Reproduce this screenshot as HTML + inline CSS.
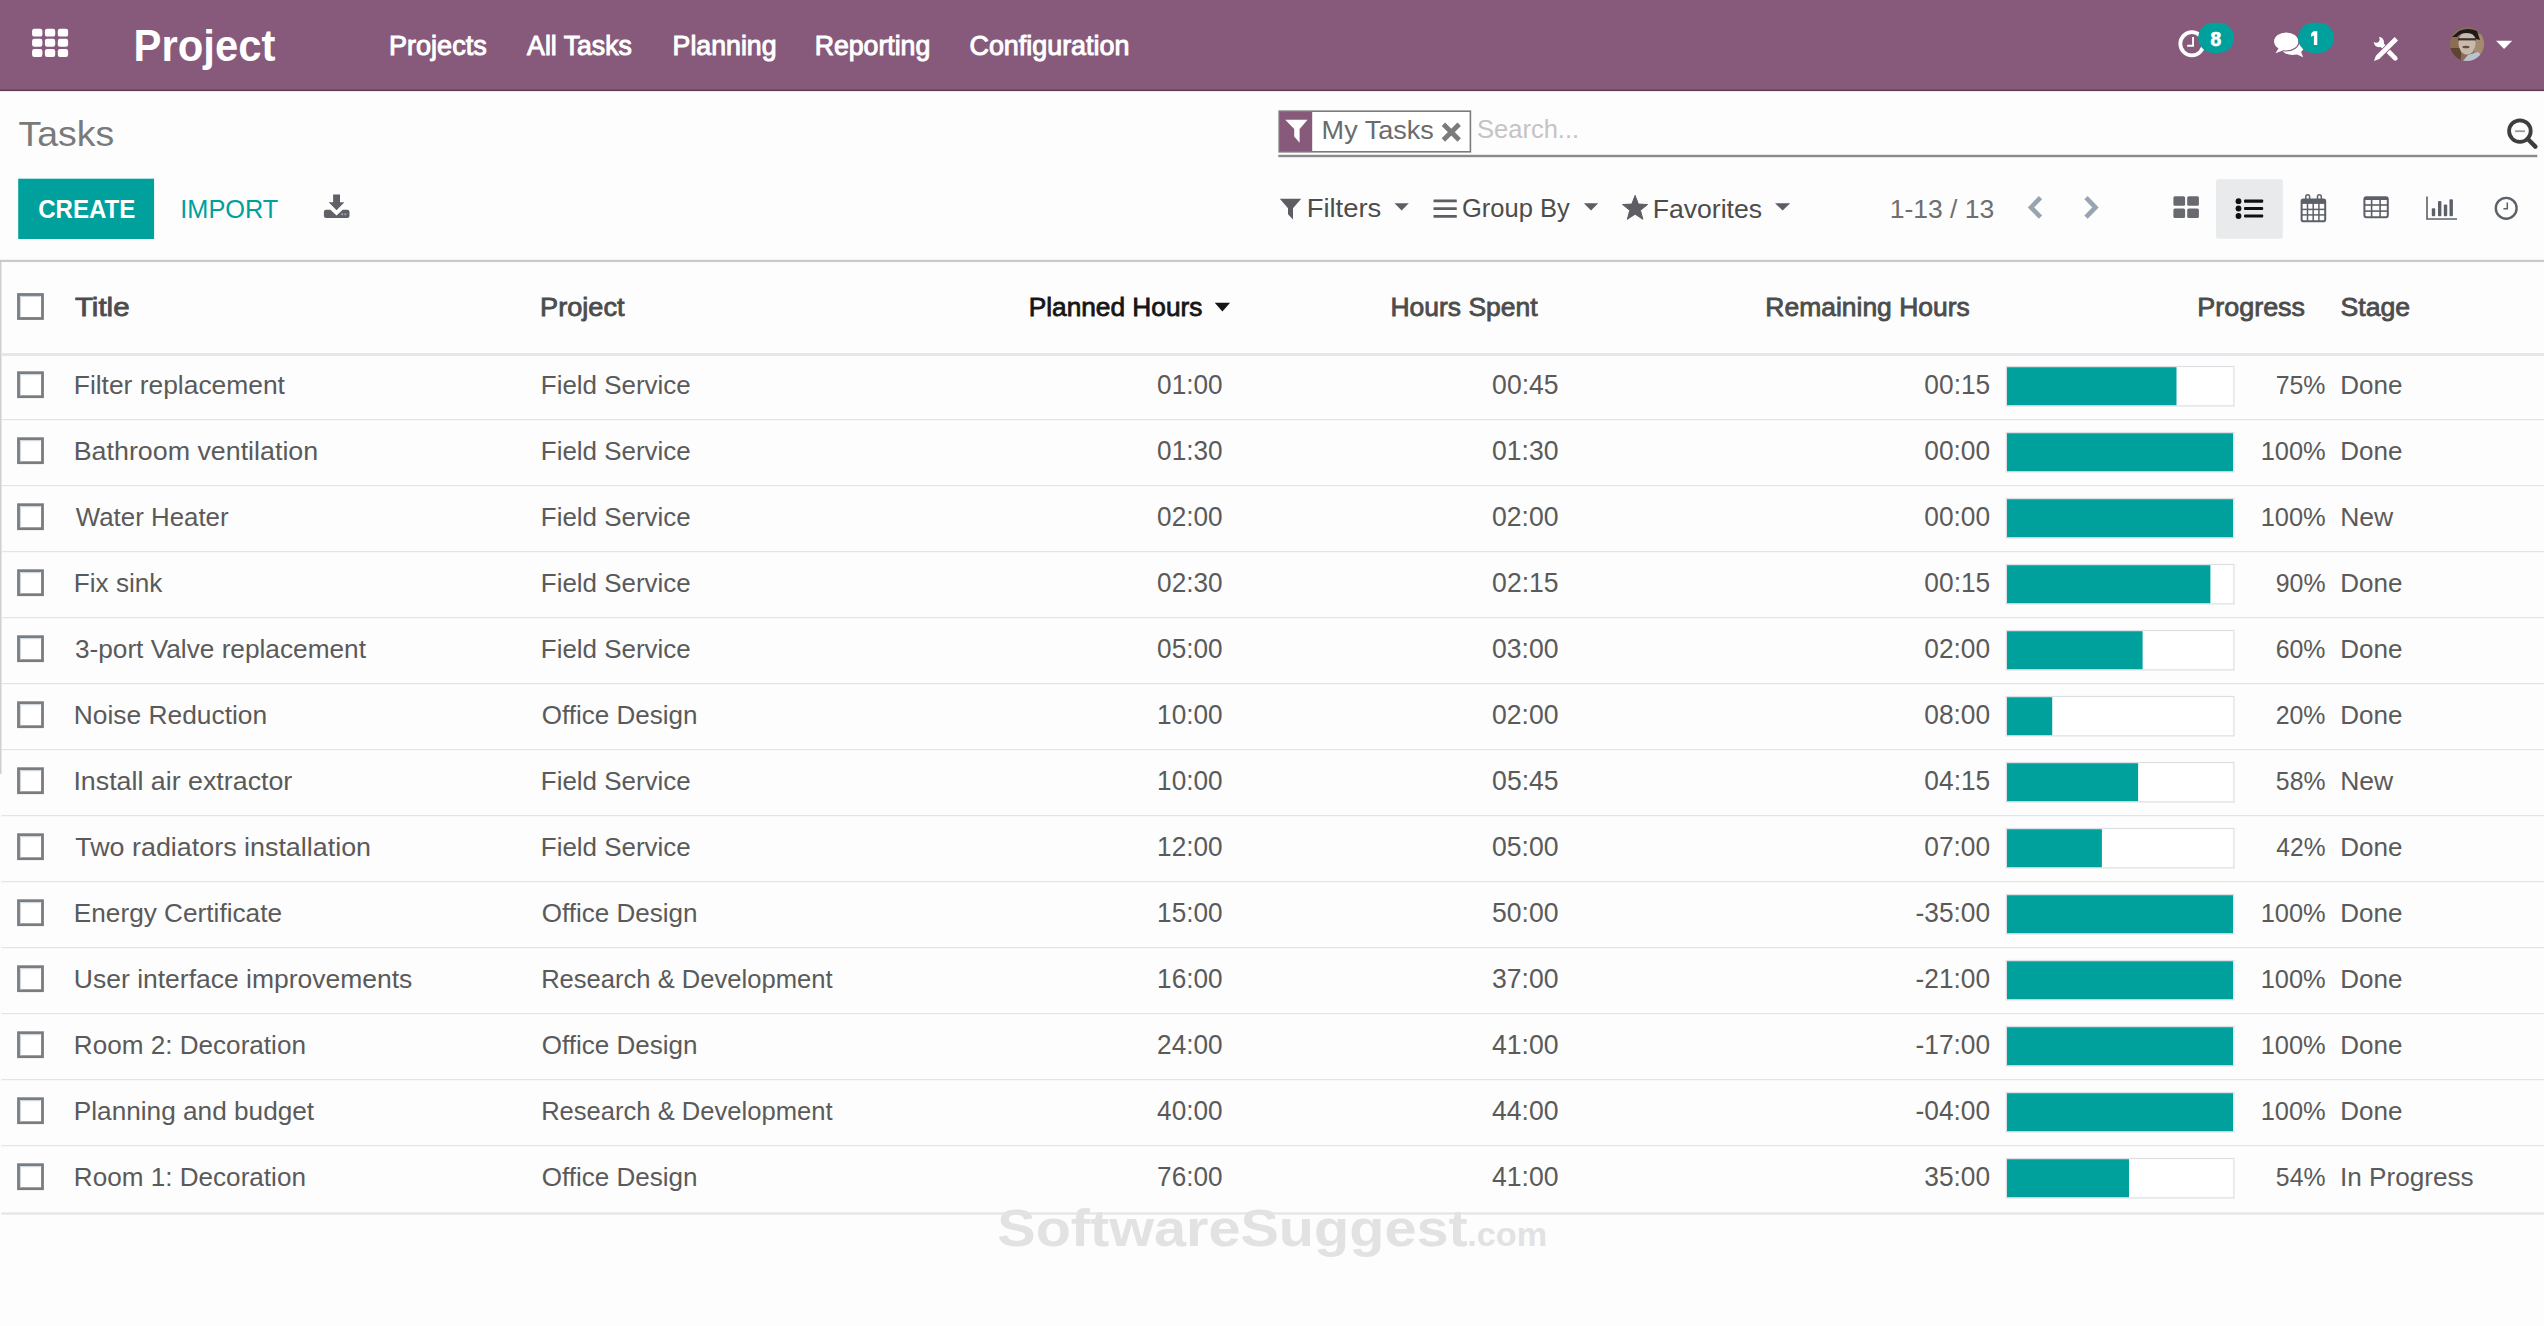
<!DOCTYPE html>
<html><head><meta charset="utf-8"><title>Tasks - Odoo</title>
<style>
html,body{margin:0;padding:0;background:#fdfdfd;overflow:hidden}
svg{display:block}
text{font-family:"Liberation Sans",sans-serif}
</style></head><body>
<svg width="2544" height="1326" viewBox="0 0 2544 1326">
<rect x="0" y="0" width="2544" height="90" fill="#875A7B"/>
<rect x="0" y="89.6" width="2544" height="1.5" fill="#5c3b53"/>
<rect x="32.1" y="28.7" width="10.3" height="7.9" rx="2.2" fill="#fff"/>
<rect x="32.1" y="38.8" width="10.3" height="7.9" rx="2.2" fill="#fff"/>
<rect x="32.1" y="49.0" width="10.3" height="7.9" rx="2.2" fill="#fff"/>
<rect x="44.9" y="28.7" width="10.3" height="7.9" rx="2.2" fill="#fff"/>
<rect x="44.9" y="38.8" width="10.3" height="7.9" rx="2.2" fill="#fff"/>
<rect x="44.9" y="49.0" width="10.3" height="7.9" rx="2.2" fill="#fff"/>
<rect x="57.8" y="28.7" width="10.3" height="7.9" rx="2.2" fill="#fff"/>
<rect x="57.8" y="38.8" width="10.3" height="7.9" rx="2.2" fill="#fff"/>
<rect x="57.8" y="49.0" width="10.3" height="7.9" rx="2.2" fill="#fff"/>
<circle cx="2191.9" cy="43.8" r="11.6" fill="none" stroke="#fff" stroke-width="3.8"/>
<path d="M2193.05 37.1 V45.75 H2187.2" fill="none" stroke="#fff" stroke-width="1.9"/>
<rect x="2198.2" y="22.8" width="35.8" height="30.1" rx="15" fill="#00A09D"/>
<ellipse cx="2292.3" cy="46.2" rx="11.6" ry="8.8" fill="#fff"/>
<path d="M2295.5 53.8 L2303.2 57.2 L2300.5 50.5 Z" fill="#fff"/>
<ellipse cx="2286.2" cy="41.4" rx="12.4" ry="9.3" fill="#fff" stroke="#875A7B" stroke-width="1.8"/>
<ellipse cx="2286.2" cy="41.4" rx="12.1" ry="9.0" fill="#fff"/>
<path d="M2279 47.5 L2275.5 53.3 L2285.5 49.5 Z" fill="#fff"/>
<rect x="2298.1" y="22.8" width="35.9" height="30.1" rx="15" fill="#00A09D"/>
<path d="M2313.9 31.2 H2317.3 V44.9 H2313.9 V35.6 L2311.0 36.7 V33.8 L2313.4 31.2 Z" fill="#fff"/>
<path d="M2379.5 42.5 L2395.3 58.3" stroke="#fff" stroke-width="4.7" stroke-linecap="round"/>
<circle cx="2378.9" cy="42.1" r="5.1" fill="#fff"/>
<circle cx="2376.2" cy="39.3" r="3.4" fill="#875A7B"/>
<path d="M2394.6 37.0 L2398.0 40.4 L2379.3 59.1 L2374.0 61.0 L2375.9 55.7 Z" fill="#fff" stroke="#875A7B" stroke-width="1.6" stroke-linejoin="round"/>
<path d="M2394.6 37.0 L2398.0 40.4 L2379.3 59.1 L2374.0 61.0 L2375.9 55.7 Z" fill="#fff"/>
<defs><radialGradient id="av" cx="50%" cy="45%" r="55%"><stop offset="0" stop-color="#c9a88c"/><stop offset="0.55" stop-color="#9b7a5c"/><stop offset="1" stop-color="#5a4634"/></radialGradient><clipPath id="avc"><circle cx="2467" cy="44" r="17.1"/></clipPath></defs>
<circle cx="2467" cy="44" r="17.1" fill="#8a6d52"/>
<g clip-path="url(#avc)"><rect x="2449" y="48" width="12" height="14" fill="#5e4532"/><rect x="2474" y="34" width="12" height="20" fill="#a38a70"/><ellipse cx="2467" cy="43" rx="8.6" ry="11.5" fill="#c8b9ad"/><path d="M2452 37 L2459 31 Q2468 27 2477 31 L2480 40 L2476 39 Q2474 33 2467 33 Q2460 33 2457 37 Z" fill="#1e1a1c"/><rect x="2458" y="38.2" width="18" height="2.2" fill="#3a2f2b"/><ellipse cx="2466" cy="47" rx="3.6" ry="1.3" fill="#6a4c3c"/><path d="M2462 62 L2468 55 L2478 52 L2484 58 L2480 62 Z" fill="#b9c3d2"/></g>
<path d="M2496 40.8 H2512.2 L2504.1 49.1 Z" fill="#fff"/>
<rect x="1279.2" y="111.2" width="191.2" height="40.6" fill="#fff" stroke="#7b7b7b" stroke-width="1.6"/>
<rect x="1280" y="112" width="32.2" height="39" fill="#875A7B"/>
<path d="M1285.2 119.8 H1307.6 L1299.6 129 V142.8 L1294.2 136.5 V129 Z" fill="#fff"/>
<path d="M1443.4 124.2 L1459.2 140.0 M1459.2 124.2 L1443.4 140.0" stroke="#7b7b7b" stroke-width="4.8" stroke-linecap="butt"/>
<rect x="1278.3" y="154.8" width="1259" height="2.4" fill="#8a8a8a"/>
<circle cx="2519.9" cy="131.1" r="10.8" fill="none" stroke="#3e3e3e" stroke-width="3.8"/>
<path d="M2527.5 138.8 L2535.4 146.6" stroke="#3e3e3e" stroke-width="4.4" stroke-linecap="round"/>
<path d="M2515 131.2 H2525" stroke="#9a9a9a" stroke-width="1.8"/>
<rect x="18.2" y="178.7" width="135.9" height="60.3" fill="#00A09D"/>
<path d="M333.1 194.6 H340 V202.3 H344.4 L336.55 210.2 L328.7 202.3 H333.1 Z" fill="#606167"/>
<path d="M323.9 211.9 Q323.9 209.7 326.1 209.7 H330.4 L336.55 215.6 L342.7 209.7 H347.3 Q349.5 209.7 349.5 211.9 V215.8 Q349.5 218 347.3 218 H326.1 Q323.9 218 323.9 215.8 Z" fill="#606167"/>
<rect x="341.2" y="213.3" width="1.9" height="1.9" fill="#9aa3b5"/><rect x="344.4" y="213.3" width="1.9" height="1.9" fill="#9aa3b5"/>
<path d="M1279.8 198.7 H1301.2 L1293 208.2 V219.4 L1288 214.2 V208.2 Z" fill="#5d5d63"/>
<path d="M1394.5 203.2 H1408.8 L1401.65 210.4 Z" fill="#5d5d63"/>
<rect x="1433.5" y="199.5" width="23.3" height="2.8" rx="0.6" fill="#5d5d63"/>
<rect x="1433.5" y="207.2" width="23.3" height="2.8" rx="0.6" fill="#5d5d63"/>
<rect x="1433.5" y="215.0" width="23.3" height="2.8" rx="0.6" fill="#5d5d63"/>
<path d="M1583.9 203.2 H1598.2 L1591.05 210.4 Z" fill="#5d5d63"/>
<polygon points="1635.10,195.40 1638.39,204.07 1647.65,204.52 1640.43,210.33 1642.86,219.28 1635.10,214.20 1627.34,219.28 1629.77,210.33 1622.55,204.52 1631.81,204.07" fill="#5d5d63" stroke="#5d5d63" stroke-width="1" stroke-linejoin="round"/>
<path d="M1775 203.2 H1790.2 L1782.6 210.6 Z" fill="#5d5d63"/>
<path d="M2040.5 197.6 L2031 207.4 L2040.5 217.2" fill="none" stroke="#97a4b1" stroke-width="4.6"/>
<path d="M2086 197.6 L2095.5 207.4 L2086 217.2" fill="none" stroke="#97a4b1" stroke-width="4.6"/>
<rect x="2216" y="179.2" width="66.8" height="59.5" rx="2" fill="#e9eaec"/>
<rect x="2173.4" y="196.2" width="11.7" height="9.6" rx="1.6" fill="#686a70"/>
<rect x="2173.4" y="208.4" width="11.7" height="9.6" rx="1.6" fill="#686a70"/>
<rect x="2187.2" y="196.2" width="11.7" height="9.6" rx="1.6" fill="#686a70"/>
<rect x="2187.2" y="208.4" width="11.7" height="9.6" rx="1.6" fill="#686a70"/>
<circle cx="2238.5" cy="201.2" r="2.9" fill="#111"/>
<rect x="2244" y="199.6" width="19.2" height="3.2" rx="1" fill="#111"/>
<circle cx="2238.5" cy="208.5" r="2.9" fill="#111"/>
<rect x="2244" y="206.9" width="19.2" height="3.2" rx="1" fill="#111"/>
<circle cx="2238.5" cy="216.0" r="2.9" fill="#111"/>
<rect x="2244" y="214.4" width="19.2" height="3.2" rx="1" fill="#111"/>
<rect x="2301.6" y="199.6" width="23.6" height="21.6" rx="1.8" fill="none" stroke="#5c6068" stroke-width="2"/>
<rect x="2301.6" y="199.6" width="23.6" height="4.3" fill="#5c6068"/>
<path d="M2307.5 203 V221" stroke="#5c6068" stroke-width="1.5"/>
<path d="M2313.2 203 V221" stroke="#5c6068" stroke-width="1.5"/>
<path d="M2318.9 203 V221" stroke="#5c6068" stroke-width="1.5"/>
<path d="M2301.6 209.4 H2325.2" stroke="#5c6068" stroke-width="1.5"/>
<path d="M2301.6 214.9 H2325.2" stroke="#5c6068" stroke-width="1.5"/>
<path d="M2305.7999999999997 201.5 V196.6 A1.9 1.9 0 0 1 2309.6 196.6 V201.5" fill="none" stroke="#5c6068" stroke-width="1.5"/>
<path d="M2317.5 201.5 V196.6 A1.9 1.9 0 0 1 2321.3 196.6 V201.5" fill="none" stroke="#5c6068" stroke-width="1.5"/>
<rect x="2364.4" y="197.2" width="23.4" height="20" rx="2" fill="none" stroke="#5c6068" stroke-width="2"/>
<rect x="2364.4" y="197.2" width="23.4" height="2.8" fill="#5c6068"/>
<path d="M2371.6 197 V217" stroke="#5c6068" stroke-width="1.6"/>
<path d="M2380.1 197 V217" stroke="#5c6068" stroke-width="1.6"/>
<path d="M2364.4 205.0 H2387.8" stroke="#5c6068" stroke-width="1.6"/>
<path d="M2364.4 211.1 H2387.8" stroke="#5c6068" stroke-width="1.6"/>
<path d="M2427 196.4 V219 H2457" fill="none" stroke="#5c6068" stroke-width="1.6"/>
<rect x="2431.8" y="208.3" width="3.4" height="7.9" rx="1" fill="#5c6068"/>
<rect x="2438.0" y="200.9" width="3.4" height="15.3" rx="1" fill="#5c6068"/>
<rect x="2443.8" y="204.6" width="3.4" height="11.6" rx="1" fill="#5c6068"/>
<rect x="2449.5" y="199.3" width="3.4" height="16.9" rx="1" fill="#5c6068"/>
<circle cx="2506.2" cy="208.3" r="10.4" fill="none" stroke="#5c6068" stroke-width="2.4"/>
<path d="M2507.3 202.6 V208.8 H2503.4" fill="none" stroke="#5c6068" stroke-width="1.5"/>
<rect x="0" y="259.8" width="2544" height="2.2" fill="#c9c9c9"/>
<rect x="0" y="262" width="1.5" height="512" fill="#cfcfcf"/>
<rect x="1.5" y="353" width="2542.5" height="3" fill="#e6e7e9"/>
<rect x="18.5" y="294.5" width="24" height="24" fill="#fff" stroke="#7c7c7c" stroke-width="2.8"/>
<path d="M20.6 317.3 V296.5 H40.6" fill="none" stroke="#c7d3df" stroke-width="1"/>
<path d="M1214.7 302.8 H1230.1 L1222.4 311.6 Z" fill="#161616"/>
<rect x="1.5" y="419" width="2542.5" height="1.2" fill="#e3e4e6"/>
<rect x="18.5" y="372.7" width="24" height="24" fill="#fff" stroke="#7c7c7c" stroke-width="2.8"/>
<path d="M20.6 395.5 V374.7 H40.6" fill="none" stroke="#c7d3df" stroke-width="1"/>
<rect x="2006.3" y="366.5" width="227.6" height="39.4" fill="#fff" stroke="#dcdfe3" stroke-width="1.2"/>
<rect x="2007" y="367.2" width="169.5" height="38" fill="#00A09D"/>
<rect x="1.5" y="485" width="2542.5" height="1.2" fill="#e3e4e6"/>
<rect x="18.5" y="438.7" width="24" height="24" fill="#fff" stroke="#7c7c7c" stroke-width="2.8"/>
<path d="M20.6 461.5 V440.7 H40.6" fill="none" stroke="#c7d3df" stroke-width="1"/>
<rect x="2006.3" y="432.5" width="227.6" height="39.4" fill="#fff" stroke="#dcdfe3" stroke-width="1.2"/>
<rect x="2007" y="433.2" width="226.0" height="38" fill="#00A09D"/>
<rect x="1.5" y="551" width="2542.5" height="1.2" fill="#e3e4e6"/>
<rect x="18.5" y="504.7" width="24" height="24" fill="#fff" stroke="#7c7c7c" stroke-width="2.8"/>
<path d="M20.6 527.5 V506.7 H40.6" fill="none" stroke="#c7d3df" stroke-width="1"/>
<rect x="2006.3" y="498.5" width="227.6" height="39.4" fill="#fff" stroke="#dcdfe3" stroke-width="1.2"/>
<rect x="2007" y="499.2" width="226.0" height="38" fill="#00A09D"/>
<rect x="1.5" y="617" width="2542.5" height="1.2" fill="#e3e4e6"/>
<rect x="18.5" y="570.6999999999999" width="24" height="24" fill="#fff" stroke="#7c7c7c" stroke-width="2.8"/>
<path d="M20.6 593.5 V572.6999999999999 H40.6" fill="none" stroke="#c7d3df" stroke-width="1"/>
<rect x="2006.3" y="564.5" width="227.6" height="39.4" fill="#fff" stroke="#dcdfe3" stroke-width="1.2"/>
<rect x="2007" y="565.2" width="203.4" height="38" fill="#00A09D"/>
<rect x="1.5" y="683" width="2542.5" height="1.2" fill="#e3e4e6"/>
<rect x="18.5" y="636.6999999999999" width="24" height="24" fill="#fff" stroke="#7c7c7c" stroke-width="2.8"/>
<path d="M20.6 659.5 V638.6999999999999 H40.6" fill="none" stroke="#c7d3df" stroke-width="1"/>
<rect x="2006.3" y="630.5" width="227.6" height="39.4" fill="#fff" stroke="#dcdfe3" stroke-width="1.2"/>
<rect x="2007" y="631.2" width="135.6" height="38" fill="#00A09D"/>
<rect x="1.5" y="749" width="2542.5" height="1.2" fill="#e3e4e6"/>
<rect x="18.5" y="702.6999999999999" width="24" height="24" fill="#fff" stroke="#7c7c7c" stroke-width="2.8"/>
<path d="M20.6 725.5 V704.6999999999999 H40.6" fill="none" stroke="#c7d3df" stroke-width="1"/>
<rect x="2006.3" y="696.5" width="227.6" height="39.4" fill="#fff" stroke="#dcdfe3" stroke-width="1.2"/>
<rect x="2007" y="697.2" width="45.2" height="38" fill="#00A09D"/>
<rect x="1.5" y="815" width="2542.5" height="1.2" fill="#e3e4e6"/>
<rect x="18.5" y="768.6999999999999" width="24" height="24" fill="#fff" stroke="#7c7c7c" stroke-width="2.8"/>
<path d="M20.6 791.5 V770.6999999999999 H40.6" fill="none" stroke="#c7d3df" stroke-width="1"/>
<rect x="2006.3" y="762.5" width="227.6" height="39.4" fill="#fff" stroke="#dcdfe3" stroke-width="1.2"/>
<rect x="2007" y="763.2" width="131.1" height="38" fill="#00A09D"/>
<rect x="1.5" y="881" width="2542.5" height="1.2" fill="#e3e4e6"/>
<rect x="18.5" y="834.6999999999999" width="24" height="24" fill="#fff" stroke="#7c7c7c" stroke-width="2.8"/>
<path d="M20.6 857.5 V836.6999999999999 H40.6" fill="none" stroke="#c7d3df" stroke-width="1"/>
<rect x="2006.3" y="828.5" width="227.6" height="39.4" fill="#fff" stroke="#dcdfe3" stroke-width="1.2"/>
<rect x="2007" y="829.2" width="94.9" height="38" fill="#00A09D"/>
<rect x="1.5" y="947" width="2542.5" height="1.2" fill="#e3e4e6"/>
<rect x="18.5" y="900.6999999999999" width="24" height="24" fill="#fff" stroke="#7c7c7c" stroke-width="2.8"/>
<path d="M20.6 923.5 V902.6999999999999 H40.6" fill="none" stroke="#c7d3df" stroke-width="1"/>
<rect x="2006.3" y="894.5" width="227.6" height="39.4" fill="#fff" stroke="#dcdfe3" stroke-width="1.2"/>
<rect x="2007" y="895.2" width="226.0" height="38" fill="#00A09D"/>
<rect x="1.5" y="1013" width="2542.5" height="1.2" fill="#e3e4e6"/>
<rect x="18.5" y="966.6999999999999" width="24" height="24" fill="#fff" stroke="#7c7c7c" stroke-width="2.8"/>
<path d="M20.6 989.5 V968.6999999999999 H40.6" fill="none" stroke="#c7d3df" stroke-width="1"/>
<rect x="2006.3" y="960.5" width="227.6" height="39.4" fill="#fff" stroke="#dcdfe3" stroke-width="1.2"/>
<rect x="2007" y="961.2" width="226.0" height="38" fill="#00A09D"/>
<rect x="1.5" y="1079" width="2542.5" height="1.2" fill="#e3e4e6"/>
<rect x="18.5" y="1032.7" width="24" height="24" fill="#fff" stroke="#7c7c7c" stroke-width="2.8"/>
<path d="M20.6 1055.5 V1034.7 H40.6" fill="none" stroke="#c7d3df" stroke-width="1"/>
<rect x="2006.3" y="1026.5" width="227.6" height="39.4" fill="#fff" stroke="#dcdfe3" stroke-width="1.2"/>
<rect x="2007" y="1027.2" width="226.0" height="38" fill="#00A09D"/>
<rect x="1.5" y="1145" width="2542.5" height="1.2" fill="#e3e4e6"/>
<rect x="18.5" y="1098.7" width="24" height="24" fill="#fff" stroke="#7c7c7c" stroke-width="2.8"/>
<path d="M20.6 1121.5 V1100.7 H40.6" fill="none" stroke="#c7d3df" stroke-width="1"/>
<rect x="2006.3" y="1092.5" width="227.6" height="39.4" fill="#fff" stroke="#dcdfe3" stroke-width="1.2"/>
<rect x="2007" y="1093.2" width="226.0" height="38" fill="#00A09D"/>
<rect x="18.5" y="1164.7" width="24" height="24" fill="#fff" stroke="#7c7c7c" stroke-width="2.8"/>
<path d="M20.6 1187.5 V1166.7 H40.6" fill="none" stroke="#c7d3df" stroke-width="1"/>
<rect x="2006.3" y="1158.5" width="227.6" height="39.4" fill="#fff" stroke="#dcdfe3" stroke-width="1.2"/>
<rect x="2007" y="1159.2" width="122.0" height="38" fill="#00A09D"/>
<rect x="1.5" y="1212.6" width="2542.5" height="1.8" fill="#e3e4e6"/>
<text transform="translate(133.61 61.10) scale(0.9295 1)" font-size="45" font-weight="700" fill="#fff">Project</text>
<text transform="translate(389.00 55.00) scale(1.0021 1)" font-size="27" font-weight="400" fill="#fff" stroke="#fff" stroke-width="1.0">Projects</text>
<text transform="translate(527.10 55.00) scale(0.9876 1)" font-size="27" font-weight="400" fill="#fff" stroke="#fff" stroke-width="1.0">All Tasks</text>
<text transform="translate(672.62 55.00) scale(0.9891 1)" font-size="27" font-weight="400" fill="#fff" stroke="#fff" stroke-width="1.0">Planning</text>
<text transform="translate(814.63 55.00) scale(0.9885 1)" font-size="27" font-weight="400" fill="#fff" stroke="#fff" stroke-width="1.0">Reporting</text>
<text transform="translate(969.51 55.00) scale(0.9956 1)" font-size="27" font-weight="400" fill="#fff" stroke="#fff" stroke-width="1.0">Configuration</text>
<text transform="translate(2210.42 45.50) scale(0.9596 1)" font-size="20" font-weight="700" fill="#fff" stroke="#fff" stroke-width="0.7">8</text>
<text transform="translate(18.43 146.40) scale(1.0822 1)" font-size="34.6" font-weight="400" fill="#7a7a7a">Tasks</text>
<text transform="translate(1321.62 138.90) scale(1.0401 1)" font-size="26" font-weight="400" fill="#6b6b6b">My Tasks</text>
<text transform="translate(1477.02 138.30) scale(0.9811 1)" font-size="26" font-weight="400" fill="#c4c4c4">Search...</text>
<text transform="translate(38.18 218.30) scale(0.9261 1)" font-size="26" font-weight="700" fill="#fff">CREATE</text>
<text transform="translate(180.26 217.70) scale(0.9744 1)" font-size="26" font-weight="400" fill="#00A09D">IMPORT</text>
<text transform="translate(1306.69 217.40) scale(1.0547 1)" font-size="26" font-weight="400" fill="#4c4c4c">Filters</text>
<text transform="translate(1462.02 217.40) scale(0.9815 1)" font-size="26" font-weight="400" fill="#4c4c4c">Group By</text>
<text transform="translate(1652.65 218.00) scale(1.0241 1)" font-size="26" font-weight="400" fill="#4c4c4c">Favorites</text>
<text transform="translate(1889.66 218.00) scale(1.0201 1)" font-size="26" font-weight="400" fill="#6f6f6f">1-13 / 13</text>
<text transform="translate(74.92 315.80) scale(1.1358 1)" font-size="26" font-weight="400" fill="#4c4c4c" stroke="#4c4c4c" stroke-width="0.8">Title</text>
<text transform="translate(540.11 315.80) scale(1.0433 1)" font-size="26" font-weight="400" fill="#4c4c4c" stroke="#4c4c4c" stroke-width="0.8">Project</text>
<text transform="translate(1028.68 316.00) scale(1.0107 1)" font-size="26" font-weight="400" fill="#161616" stroke="#161616" stroke-width="0.8">Planned Hours</text>
<text transform="translate(1390.46 315.90) scale(1.0190 1)" font-size="26" font-weight="400" fill="#4c4c4c" stroke="#4c4c4c" stroke-width="0.8">Hours Spent</text>
<text transform="translate(1765.36 316.00) scale(1.0182 1)" font-size="26" font-weight="400" fill="#4c4c4c" stroke="#4c4c4c" stroke-width="0.8">Remaining Hours</text>
<text transform="translate(2197.33 315.80) scale(1.0356 1)" font-size="26" font-weight="400" fill="#4c4c4c" stroke="#4c4c4c" stroke-width="0.8">Progress</text>
<text transform="translate(2340.57 315.80) scale(1.0244 1)" font-size="26" font-weight="400" fill="#4c4c4c" stroke="#4c4c4c" stroke-width="0.8">Stage</text>
<text transform="translate(73.77 394.10) scale(1.0151 1)" font-size="26" font-weight="400" fill="#5a5a5a">Filter replacement</text>
<text transform="translate(540.81 394.10) scale(0.9973 1)" font-size="26" font-weight="400" fill="#5a5a5a">Field Service</text>
<text transform="translate(1157.09 394.10) scale(0.9700 1)" font-size="27" font-weight="400" fill="#5a5a5a">01:00</text>
<text transform="translate(1492.10 394.10) scale(0.9850 1)" font-size="27" font-weight="400" fill="#5a5a5a">00:45</text>
<text transform="translate(1924.36 394.10) scale(0.9750 1)" font-size="27" font-weight="400" fill="#5a5a5a">00:15</text>
<text transform="translate(2275.65 394.10) scale(0.9578 1)" font-size="26" font-weight="400" fill="#5a5a5a">75%</text>
<text transform="translate(2340.20 394.10) scale(1.0017 1)" font-size="26" font-weight="400" fill="#5a5a5a">Done</text>
<text transform="translate(73.73 460.10) scale(1.0317 1)" font-size="26" font-weight="400" fill="#5a5a5a">Bathroom ventilation</text>
<text transform="translate(540.81 460.10) scale(0.9973 1)" font-size="26" font-weight="400" fill="#5a5a5a">Field Service</text>
<text transform="translate(1157.09 460.10) scale(0.9700 1)" font-size="27" font-weight="400" fill="#5a5a5a">01:30</text>
<text transform="translate(1492.00 460.10) scale(0.9850 1)" font-size="27" font-weight="400" fill="#5a5a5a">01:30</text>
<text transform="translate(1924.26 460.10) scale(0.9750 1)" font-size="27" font-weight="400" fill="#5a5a5a">00:00</text>
<text transform="translate(2260.64 460.10) scale(0.9796 1)" font-size="26" font-weight="400" fill="#5a5a5a">100%</text>
<text transform="translate(2340.20 460.10) scale(1.0017 1)" font-size="26" font-weight="400" fill="#5a5a5a">Done</text>
<text transform="translate(75.80 526.10) scale(0.9948 1)" font-size="26" font-weight="400" fill="#5a5a5a">Water Heater</text>
<text transform="translate(540.81 526.10) scale(0.9973 1)" font-size="26" font-weight="400" fill="#5a5a5a">Field Service</text>
<text transform="translate(1157.09 526.10) scale(0.9700 1)" font-size="27" font-weight="400" fill="#5a5a5a">02:00</text>
<text transform="translate(1492.00 526.10) scale(0.9850 1)" font-size="27" font-weight="400" fill="#5a5a5a">02:00</text>
<text transform="translate(1924.26 526.10) scale(0.9750 1)" font-size="27" font-weight="400" fill="#5a5a5a">00:00</text>
<text transform="translate(2260.64 526.10) scale(0.9796 1)" font-size="26" font-weight="400" fill="#5a5a5a">100%</text>
<text transform="translate(2340.16 526.10) scale(1.0200 1)" font-size="26" font-weight="400" fill="#5a5a5a">New</text>
<text transform="translate(73.79 592.10) scale(1.0058 1)" font-size="26" font-weight="400" fill="#5a5a5a">Fix sink</text>
<text transform="translate(540.81 592.10) scale(0.9973 1)" font-size="26" font-weight="400" fill="#5a5a5a">Field Service</text>
<text transform="translate(1157.09 592.10) scale(0.9700 1)" font-size="27" font-weight="400" fill="#5a5a5a">02:30</text>
<text transform="translate(1492.10 592.10) scale(0.9850 1)" font-size="27" font-weight="400" fill="#5a5a5a">02:15</text>
<text transform="translate(1924.36 592.10) scale(0.9750 1)" font-size="27" font-weight="400" fill="#5a5a5a">00:15</text>
<text transform="translate(2275.75 592.10) scale(0.9559 1)" font-size="26" font-weight="400" fill="#5a5a5a">90%</text>
<text transform="translate(2340.20 592.10) scale(1.0017 1)" font-size="26" font-weight="400" fill="#5a5a5a">Done</text>
<text transform="translate(74.89 658.10) scale(1.0090 1)" font-size="26" font-weight="400" fill="#5a5a5a">3-port Valve replacement</text>
<text transform="translate(540.81 658.10) scale(0.9973 1)" font-size="26" font-weight="400" fill="#5a5a5a">Field Service</text>
<text transform="translate(1157.09 658.10) scale(0.9700 1)" font-size="27" font-weight="400" fill="#5a5a5a">05:00</text>
<text transform="translate(1492.00 658.10) scale(0.9850 1)" font-size="27" font-weight="400" fill="#5a5a5a">03:00</text>
<text transform="translate(1924.26 658.10) scale(0.9750 1)" font-size="27" font-weight="400" fill="#5a5a5a">02:00</text>
<text transform="translate(2275.65 658.10) scale(0.9578 1)" font-size="26" font-weight="400" fill="#5a5a5a">60%</text>
<text transform="translate(2340.20 658.10) scale(1.0017 1)" font-size="26" font-weight="400" fill="#5a5a5a">Done</text>
<text transform="translate(73.77 724.10) scale(1.0139 1)" font-size="26" font-weight="400" fill="#5a5a5a">Noise Reduction</text>
<text transform="translate(541.70 724.10) scale(1.0020 1)" font-size="26" font-weight="400" fill="#5a5a5a">Office Design</text>
<text transform="translate(1157.09 724.10) scale(0.9700 1)" font-size="27" font-weight="400" fill="#5a5a5a">10:00</text>
<text transform="translate(1492.00 724.10) scale(0.9850 1)" font-size="27" font-weight="400" fill="#5a5a5a">02:00</text>
<text transform="translate(1924.26 724.10) scale(0.9750 1)" font-size="27" font-weight="400" fill="#5a5a5a">08:00</text>
<text transform="translate(2275.65 724.10) scale(0.9578 1)" font-size="26" font-weight="400" fill="#5a5a5a">20%</text>
<text transform="translate(2340.20 724.10) scale(1.0017 1)" font-size="26" font-weight="400" fill="#5a5a5a">Done</text>
<text transform="translate(73.43 790.10) scale(1.0310 1)" font-size="26" font-weight="400" fill="#5a5a5a">Install air extractor</text>
<text transform="translate(540.81 790.10) scale(0.9973 1)" font-size="26" font-weight="400" fill="#5a5a5a">Field Service</text>
<text transform="translate(1157.09 790.10) scale(0.9700 1)" font-size="27" font-weight="400" fill="#5a5a5a">10:00</text>
<text transform="translate(1492.10 790.10) scale(0.9850 1)" font-size="27" font-weight="400" fill="#5a5a5a">05:45</text>
<text transform="translate(1924.36 790.10) scale(0.9750 1)" font-size="27" font-weight="400" fill="#5a5a5a">04:15</text>
<text transform="translate(2275.85 790.10) scale(0.9540 1)" font-size="26" font-weight="400" fill="#5a5a5a">58%</text>
<text transform="translate(2340.16 790.10) scale(1.0200 1)" font-size="26" font-weight="400" fill="#5a5a5a">New</text>
<text transform="translate(75.28 856.10) scale(1.0338 1)" font-size="26" font-weight="400" fill="#5a5a5a">Two radiators installation</text>
<text transform="translate(540.81 856.10) scale(0.9973 1)" font-size="26" font-weight="400" fill="#5a5a5a">Field Service</text>
<text transform="translate(1157.09 856.10) scale(0.9700 1)" font-size="27" font-weight="400" fill="#5a5a5a">12:00</text>
<text transform="translate(1492.00 856.10) scale(0.9850 1)" font-size="27" font-weight="400" fill="#5a5a5a">05:00</text>
<text transform="translate(1924.26 856.10) scale(0.9750 1)" font-size="27" font-weight="400" fill="#5a5a5a">07:00</text>
<text transform="translate(2276.33 856.10) scale(0.9446 1)" font-size="26" font-weight="400" fill="#5a5a5a">42%</text>
<text transform="translate(2340.20 856.10) scale(1.0017 1)" font-size="26" font-weight="400" fill="#5a5a5a">Done</text>
<text transform="translate(73.78 922.10) scale(1.0084 1)" font-size="26" font-weight="400" fill="#5a5a5a">Energy Certificate</text>
<text transform="translate(541.70 922.10) scale(1.0020 1)" font-size="26" font-weight="400" fill="#5a5a5a">Office Design</text>
<text transform="translate(1157.09 922.10) scale(0.9700 1)" font-size="27" font-weight="400" fill="#5a5a5a">15:00</text>
<text transform="translate(1492.00 922.10) scale(0.9850 1)" font-size="27" font-weight="400" fill="#5a5a5a">50:00</text>
<text transform="translate(1915.49 922.10) scale(0.9750 1)" font-size="27" font-weight="400" fill="#5a5a5a">-35:00</text>
<text transform="translate(2260.64 922.10) scale(0.9796 1)" font-size="26" font-weight="400" fill="#5a5a5a">100%</text>
<text transform="translate(2340.20 922.10) scale(1.0017 1)" font-size="26" font-weight="400" fill="#5a5a5a">Done</text>
<text transform="translate(73.86 988.10) scale(1.0191 1)" font-size="26" font-weight="400" fill="#5a5a5a">User interface improvements</text>
<text transform="translate(541.13 988.10) scale(0.9840 1)" font-size="26" font-weight="400" fill="#5a5a5a">Research &amp; Development</text>
<text transform="translate(1157.09 988.10) scale(0.9700 1)" font-size="27" font-weight="400" fill="#5a5a5a">16:00</text>
<text transform="translate(1492.00 988.10) scale(0.9850 1)" font-size="27" font-weight="400" fill="#5a5a5a">37:00</text>
<text transform="translate(1915.49 988.10) scale(0.9750 1)" font-size="27" font-weight="400" fill="#5a5a5a">-21:00</text>
<text transform="translate(2260.64 988.10) scale(0.9796 1)" font-size="26" font-weight="400" fill="#5a5a5a">100%</text>
<text transform="translate(2340.20 988.10) scale(1.0017 1)" font-size="26" font-weight="400" fill="#5a5a5a">Done</text>
<text transform="translate(73.79 1054.10) scale(1.0044 1)" font-size="26" font-weight="400" fill="#5a5a5a">Room 2: Decoration</text>
<text transform="translate(541.70 1054.10) scale(1.0020 1)" font-size="26" font-weight="400" fill="#5a5a5a">Office Design</text>
<text transform="translate(1157.09 1054.10) scale(0.9700 1)" font-size="27" font-weight="400" fill="#5a5a5a">24:00</text>
<text transform="translate(1492.00 1054.10) scale(0.9850 1)" font-size="27" font-weight="400" fill="#5a5a5a">41:00</text>
<text transform="translate(1915.49 1054.10) scale(0.9750 1)" font-size="27" font-weight="400" fill="#5a5a5a">-17:00</text>
<text transform="translate(2260.64 1054.10) scale(0.9796 1)" font-size="26" font-weight="400" fill="#5a5a5a">100%</text>
<text transform="translate(2340.20 1054.10) scale(1.0017 1)" font-size="26" font-weight="400" fill="#5a5a5a">Done</text>
<text transform="translate(73.78 1120.10) scale(1.0080 1)" font-size="26" font-weight="400" fill="#5a5a5a">Planning and budget</text>
<text transform="translate(541.13 1120.10) scale(0.9840 1)" font-size="26" font-weight="400" fill="#5a5a5a">Research &amp; Development</text>
<text transform="translate(1157.09 1120.10) scale(0.9700 1)" font-size="27" font-weight="400" fill="#5a5a5a">40:00</text>
<text transform="translate(1492.00 1120.10) scale(0.9850 1)" font-size="27" font-weight="400" fill="#5a5a5a">44:00</text>
<text transform="translate(1915.49 1120.10) scale(0.9750 1)" font-size="27" font-weight="400" fill="#5a5a5a">-04:00</text>
<text transform="translate(2260.64 1120.10) scale(0.9796 1)" font-size="26" font-weight="400" fill="#5a5a5a">100%</text>
<text transform="translate(2340.20 1120.10) scale(1.0017 1)" font-size="26" font-weight="400" fill="#5a5a5a">Done</text>
<text transform="translate(73.79 1186.10) scale(1.0044 1)" font-size="26" font-weight="400" fill="#5a5a5a">Room 1: Decoration</text>
<text transform="translate(541.70 1186.10) scale(1.0020 1)" font-size="26" font-weight="400" fill="#5a5a5a">Office Design</text>
<text transform="translate(1157.09 1186.10) scale(0.9700 1)" font-size="27" font-weight="400" fill="#5a5a5a">76:00</text>
<text transform="translate(1492.00 1186.10) scale(0.9850 1)" font-size="27" font-weight="400" fill="#5a5a5a">41:00</text>
<text transform="translate(1924.26 1186.10) scale(0.9750 1)" font-size="27" font-weight="400" fill="#5a5a5a">35:00</text>
<text transform="translate(2275.85 1186.10) scale(0.9540 1)" font-size="26" font-weight="400" fill="#5a5a5a">54%</text>
<text transform="translate(2339.89 1186.10) scale(1.0062 1)" font-size="26" font-weight="400" fill="#5a5a5a">In Progress</text>
<text transform="translate(997.24 1246.00) scale(1.1077 1)" font-size="52" font-weight="700" fill="#e2e2e2">SoftwareSuggest</text>
<text transform="translate(1467.18 1246.00) scale(1.0067 1)" font-size="34" font-weight="700" fill="#e2e2e2">.com</text>
<rect x="1.5" y="1212.6" width="2542.5" height="1.8" fill="#e3e4e6" opacity="0.55"/>
</svg>
</body></html>
